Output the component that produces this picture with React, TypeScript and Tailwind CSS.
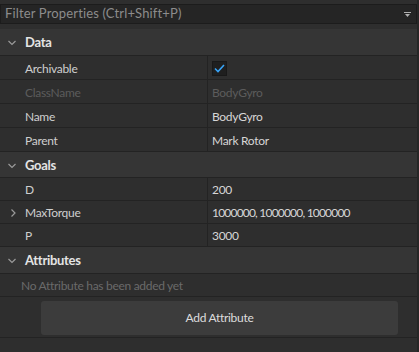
import React from "react";

interface Prop {
  name: string;
  value?: string;
  check?: boolean;
  disabled?: boolean;
  expandable?: boolean;
}

const sections: { title: string; head: string; row: string; rows: Prop[] }[] = [
  {
    title: "Data",
    head: "h-[27px]",
    row: "h-[24px]",
    rows: [
      { name: "Archivable", check: true },
      { name: "ClassName", value: "BodyGyro", disabled: true },
      { name: "Name", value: "BodyGyro" },
      { name: "Parent", value: "Mark Rotor" },
    ],
  },
  {
    title: "Goals",
    head: "h-[26px]",
    row: "h-[23px]",
    rows: [
      { name: "D", value: "200" },
      { name: "MaxTorque", value: "1000000, 1000000, 1000000", expandable: true },
      { name: "P", value: "3000" },
    ],
  },
];

const Chevron: React.FC<{ open?: boolean }> = ({ open }) => (
  <svg width="8" height="8" viewBox="0 0 8 8" className="shrink-0">
    {open ? (
      <path d="M0.5 2 L4 5.5 L7.5 2" fill="none" stroke="#9a9a9a" strokeWidth="1.2" />
    ) : (
      <path d="M2.5 0.5 L6 4 L2.5 7.5" fill="none" stroke="#9a9a9a" strokeWidth="1.2" />
    )}
  </svg>
);

const SectionHeader: React.FC<{ title: string; h: string }> = ({ title, h }) => (
  <div className={`${h} flex items-center bg-[#353535] border-b border-[#232323] pt-[2px]`}>
    <div className="w-[25px] pl-[8px] flex items-center">
      <Chevron open />
    </div>
    <span className="font-bold text-[13px] tracking-[-0.3px] text-[#e4e4e4]">{title}</span>
  </div>
);

const Row: React.FC<{ p: Prop; h: string }> = ({ p, h }) => (
  <div className={`${h} flex border-b border-[#232323] text-[12px] tracking-[-0.3px]`}>
    <div className="w-[208px] flex items-center border-r border-[#232323] pt-[2px]">
      <div className="w-[25px] pl-[9px] flex items-center">
        {p.expandable && <Chevron />}
      </div>
      <span className={p.disabled ? "text-[#5c5c5c]" : "text-[#cfcfcf]"}>{p.name}</span>
    </div>
    <div className="flex-1 flex items-center pl-[4px] pt-[2px]">
      {p.check ? (
        <div className="w-[15px] h-[15px] bg-[#1f1f1f] border border-[#191919] flex items-center justify-center">
          <svg width="11" height="9" viewBox="0 0 11 9">
            <path d="M1 4.5 L4 7.5 L10 1" fill="none" stroke="#38a4f8" strokeWidth="1.6" />
          </svg>
        </div>
      ) : (
        <span
          className={
            p.disabled
              ? "text-[#5c5c5c]"
              : p.expandable
              ? "text-[#d6d6d6] tracking-[-0.8px]"
              : "text-[#d6d6d6]"
          }
        >
          {p.value}
        </span>
      )}
    </div>
  </div>
);

const App: React.FC = () => {
  return (
    <div
      className="w-[419px] h-[352px] bg-[#2e2e2e] flex overflow-hidden"
      style={{ fontFamily: "Lato, 'Open Sans', sans-serif" }}
    >
      <div className="flex-1 flex flex-col">
        <div className="pt-[4px] pb-[5px]">
          <div className="h-[20px] bg-[#252525] border border-[#1c1c1c] flex items-center px-[4px]">
            <span className="flex-1 text-[13px] tracking-[0.15px] text-[#8c8c8c]">
              Filter Properties (Ctrl+Shift+P)
            </span>
            <svg width="7" height="5" viewBox="0 0 7 5" className="mr-[1px]">
              <rect x="0" y="0" width="7" height="1" fill="#b0b0b0" />
              <path d="M1 2 L6 2 L3.5 5 Z" fill="#b0b0b0" />
            </svg>
          </div>
        </div>
        <div>
          {sections.map((s) => (
            <div key={s.title}>
              <SectionHeader title={s.title} h={s.head} />
              {s.rows.map((r) => (
                <Row key={r.name} p={r} h={s.row} />
              ))}
            </div>
          ))}
          <SectionHeader title="Attributes" h="h-[27px]" />
          <div className="h-[23px] flex items-center pl-[21px] pt-[2px] border-b border-[#232323] text-[12px] tracking-[-0.3px] text-[#6a6a6a]">
            No Attribute has been added yet
          </div>
          <div className="pt-[4px] pb-[2px] pl-[41px] pr-[19px] border-b border-[#232323]">
            <button className="w-full h-[34px] rounded-[3px] bg-[#3c3c3c] text-[12px] tracking-[-0.3px] text-[#dcdcdc]">
              Add Attribute
            </button>
          </div>
        </div>
      </div>
      <div className="w-[2px] bg-[#262626]" />
    </div>
  );
};

export default App;
